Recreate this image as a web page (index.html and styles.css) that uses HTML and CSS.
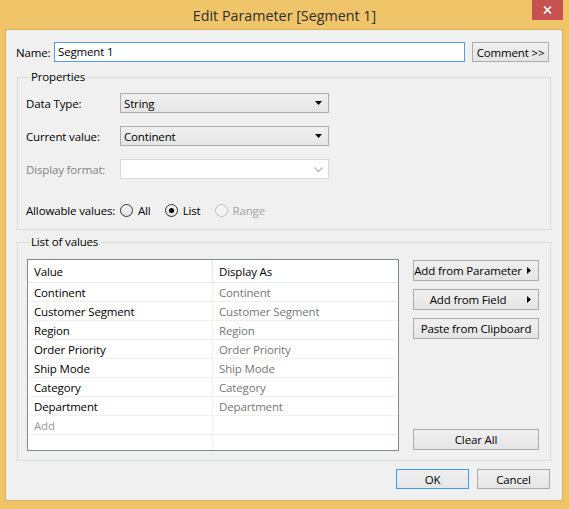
FILE: index.html
```html
<!DOCTYPE html>
<html lang="en">
<head>
    <meta charset="UTF-8">
    <meta name="viewport" content="width=device-width, initial-scale=1.0">
    <title>Edit Parameter [Segment 1]</title>
    <link rel="stylesheet" href="styles.css">
</head>
<body>
    <div class="window">
        <div class="titlebar">
            <span class="title">Edit Parameter [Segment 1]</span>
            <!-- Window close button -->
            <button class="close-btn" aria-label="Close">
                <svg width="9" height="8" viewBox="0 0 9 8"><path d="M1 0.5L8 7.5M8 0.5L1 7.5" stroke="#fff" stroke-width="1.7"/></svg>
            </button>
        </div>

        <div class="client">
            <div class="name-row">
                <label class="name-label">Name:</label>
                <div class="text-input focused">Segment 1</div>
                <button class="btn comment-btn">Comment &gt;&gt;</button>
            </div>

            <fieldset class="group">
                <legend>Properties</legend>
                <div class="props">
                    <div class="prop-row">
                        <span class="prop-label">Data Type:</span>
                        <div class="combo">
                            <span>String</span>
                            <svg width="7" height="4" viewBox="0 0 7 4"><path d="M0 0H7L3.5 4Z" fill="#000"/></svg>
                        </div>
                    </div>
                    <div class="prop-row">
                        <span class="prop-label">Current value:</span>
                        <div class="combo">
                            <span>Continent</span>
                            <svg width="7" height="4" viewBox="0 0 7 4"><path d="M0 0H7L3.5 4Z" fill="#000"/></svg>
                        </div>
                    </div>
                    <div class="prop-row">
                        <span class="prop-label disabled">Display format:</span>
                        <div class="combo disabled">
                            <span></span>
                            <svg width="9" height="5" viewBox="0 0 9 5"><path d="M0.5 0.5L4.5 4.5L8.5 0.5" fill="none" stroke="#b4b4b4" stroke-width="1.2"/></svg>
                        </div>
                    </div>
                    <div class="prop-row radio-row">
                        <span class="prop-label">Allowable values:</span>
                        <div class="radios">
                            <span class="radio-item"><span class="radio"></span>All</span>
                            <span class="radio-item"><span class="radio checked"></span>List</span>
                            <span class="radio-item disabled"><span class="radio"></span>Range</span>
                        </div>
                    </div>
                </div>
            </fieldset>

            <fieldset class="group list-group">
                <legend>List of values</legend>
                <div class="values-body">
                    <div class="values-table">
                        <div class="vrow head">
                            <div class="cell">Value</div>
                            <div class="cell">Display As</div>
                        </div>
                        <div class="vrow"><div class="cell">Continent</div><div class="cell alias">Continent</div></div>
                        <div class="vrow"><div class="cell">Customer Segment</div><div class="cell alias">Customer Segment</div></div>
                        <div class="vrow"><div class="cell">Region</div><div class="cell alias">Region</div></div>
                        <div class="vrow"><div class="cell">Order Priority</div><div class="cell alias">Order Priority</div></div>
                        <div class="vrow"><div class="cell">Ship Mode</div><div class="cell alias">Ship Mode</div></div>
                        <div class="vrow"><div class="cell">Category</div><div class="cell alias">Category</div></div>
                        <div class="vrow"><div class="cell">Department</div><div class="cell alias">Department</div></div>
                        <div class="vrow"><div class="cell placeholder">Add</div><div class="cell"></div></div>
                        <div class="vrow filler"><div class="cell"></div><div class="cell"></div></div>
                    </div>

                    <div class="side-buttons">
                        <button class="btn menu-btn">
                            <span>Add from Parameter</span>
                            <svg width="4" height="7" viewBox="0 0 4 7"><path d="M0 0L4 3.5L0 7Z" fill="#000"/></svg>
                        </button>
                        <button class="btn menu-btn">
                            <span>Add from Field</span>
                            <svg width="4" height="7" viewBox="0 0 4 7"><path d="M0 0L4 3.5L0 7Z" fill="#000"/></svg>
                        </button>
                        <button class="btn side-btn">Paste from Clipboard</button>
                        <button class="btn side-btn clear-btn">Clear All</button>
                    </div>
                </div>
            </fieldset>

            <div class="dialog-buttons">
                <button class="btn dialog-btn default">OK</button>
                <button class="btn dialog-btn">Cancel</button>
            </div>
        </div>
    </div>
</body>
</html>
```

FILE: styles.css
```css
* {
    box-sizing: border-box;
}

body {
    margin: 0;
    font-family: "Open Sans", "Noto Sans", sans-serif;
    font-size: 11.5px;
    letter-spacing: -0.15px;
    color: #000;
    white-space: nowrap;
    background-color: #f0c56a;
}

.window {
    width: 569px;
    height: 509px;
    background-color: #f0c56a;
}

/* Title bar */
.titlebar {
    position: relative;
    height: 29px;
    text-align: center;
}

.titlebar .title {
    display: inline-block;
    padding-top: 5px;
    font-size: 14.3px;
    letter-spacing: 0;
    line-height: 22px;
    color: #2d2d2d;
}

.close-btn {
    position: absolute;
    top: 0;
    right: 6px;
    width: 31px;
    height: 20px;
    padding: 0;
    border: none;
    background-color: #c75050;
    display: flex;
    align-items: center;
    justify-content: center;
}

/* Dialog body */
.client {
    width: 558px;
    margin-left: 5px;
    padding: 12px 11px 11px 10px;
    background-color: #f0f0f0;
    border: 1px solid #d6b05c;
}

.name-row {
    display: flex;
    align-items: center;
    height: 20px;
}

.name-label {
    width: 38px;
}

.text-input {
    width: 411px;
    height: 20px;
    padding-left: 3px;
    line-height: 18px;
    background-color: #fff;
    border: 1px solid #abadb3;
}

.text-input.focused {
    border-color: #569de5;
}

.btn {
    font-family: inherit;
    font-size: 11.5px;
    letter-spacing: inherit;
    color: #000;
    padding: 0;
    white-space: nowrap;
    border: 1px solid #acacac;
    background: linear-gradient(#f0f0f0, #e5e5e5);
}

.comment-btn {
    width: 77px;
    height: 20px;
    margin-left: 7px;
}

/* Group boxes */
.group {
    margin: 7px 0 0 1px;
    padding: 0 8px 9px 8px;
    border: 1px solid #dcdcdc;
    min-width: 0;
}

.group legend {
    margin-left: 4px;
    padding: 0 3px 0 1px;
    line-height: 16px;
}

.props {
    padding-top: 8px;
    display: flex;
    flex-direction: column;
    gap: 13px;
}

.prop-row {
    display: flex;
    align-items: center;
    height: 20px;
}

.prop-row.radio-row {
    margin-top: 8px;
}

.prop-label {
    width: 94px;
    flex-shrink: 0;
}

.prop-label.disabled {
    color: #838383;
}

.combo {
    width: 209px;
    height: 20px;
    padding: 0 6px 0 3px;
    display: flex;
    align-items: center;
    justify-content: space-between;
    border: 1px solid #acacac;
    background: linear-gradient(#f0f0f0, #e5e5e5);
}

.combo.disabled {
    background: #fff;
    border-color: #d9d9d9;
    padding-right: 5px;
}

.radios {
    display: flex;
    align-items: center;
    gap: 14px;
}

.radio-item {
    display: flex;
    align-items: center;
    gap: 5px;
}

.radio-item.disabled {
    color: #a3a3a3;
}

.radio {
    width: 13px;
    height: 13px;
    border: 1px solid #333;
    border-radius: 50%;
    background: linear-gradient(#f6f6f6, #e0e0e0);
    display: flex;
    align-items: center;
    justify-content: center;
}

.radio.checked::after {
    content: "";
    width: 5px;
    height: 5px;
    border-radius: 50%;
    background-color: #000;
}

.radio-item.disabled .radio {
    border-color: #bcbcbc;
    background: #f4f4f4;
}

/* List of values */
.list-group {
    margin-top: 4px;
}

.values-body {
    padding-top: 9px;
    margin-left: 1px;
    display: flex;
    height: 201px;
}

.values-table {
    width: 372px;
    height: 192px;
    border: 1px solid #828790;
    background-color: #fff;
    display: flex;
    flex-direction: column;
    overflow: hidden;
}

.vrow {
    display: grid;
    grid-template-columns: 185px 1fr;
    height: 19px;
    border-bottom: 1px solid #f0f0f0;
    flex-shrink: 0;
}

.vrow.head {
    height: 23px;
    border-bottom-color: #e4eaf2;
}

.vrow.filler {
    flex: 1;
    border-bottom: none;
}

.cell {
    padding-left: 6px;
    display: flex;
    align-items: center;
}

.cell:first-child {
    border-right: 1px solid #f0f0f0;
}

.head .cell:first-child {
    border-right-color: #e4eaf2;
}

.cell.alias {
    color: #767676;
}

.cell.placeholder {
    color: #9b9b9b;
}

.side-buttons {
    margin-left: 14px;
    padding: 1px 0 1px 0;
    display: flex;
    flex-direction: column;
    gap: 8px;
}

.side-buttons .btn {
    width: 126px;
    height: 21px;
}

.menu-btn {
    display: grid;
    grid-template-columns: 1fr 4px;
    column-gap: 5px;
    align-items: center;
    padding-right: 7px;
}

.clear-btn {
    margin-top: auto;
}

/* OK / Cancel */
.dialog-buttons {
    margin-top: 8px;
    display: flex;
    justify-content: flex-end;
    gap: 8px;
    padding-right: 1px;
}

.dialog-btn {
    width: 73px;
    height: 20px;
}

.dialog-btn.default {
    border-color: #3c9cf0;
}
```
